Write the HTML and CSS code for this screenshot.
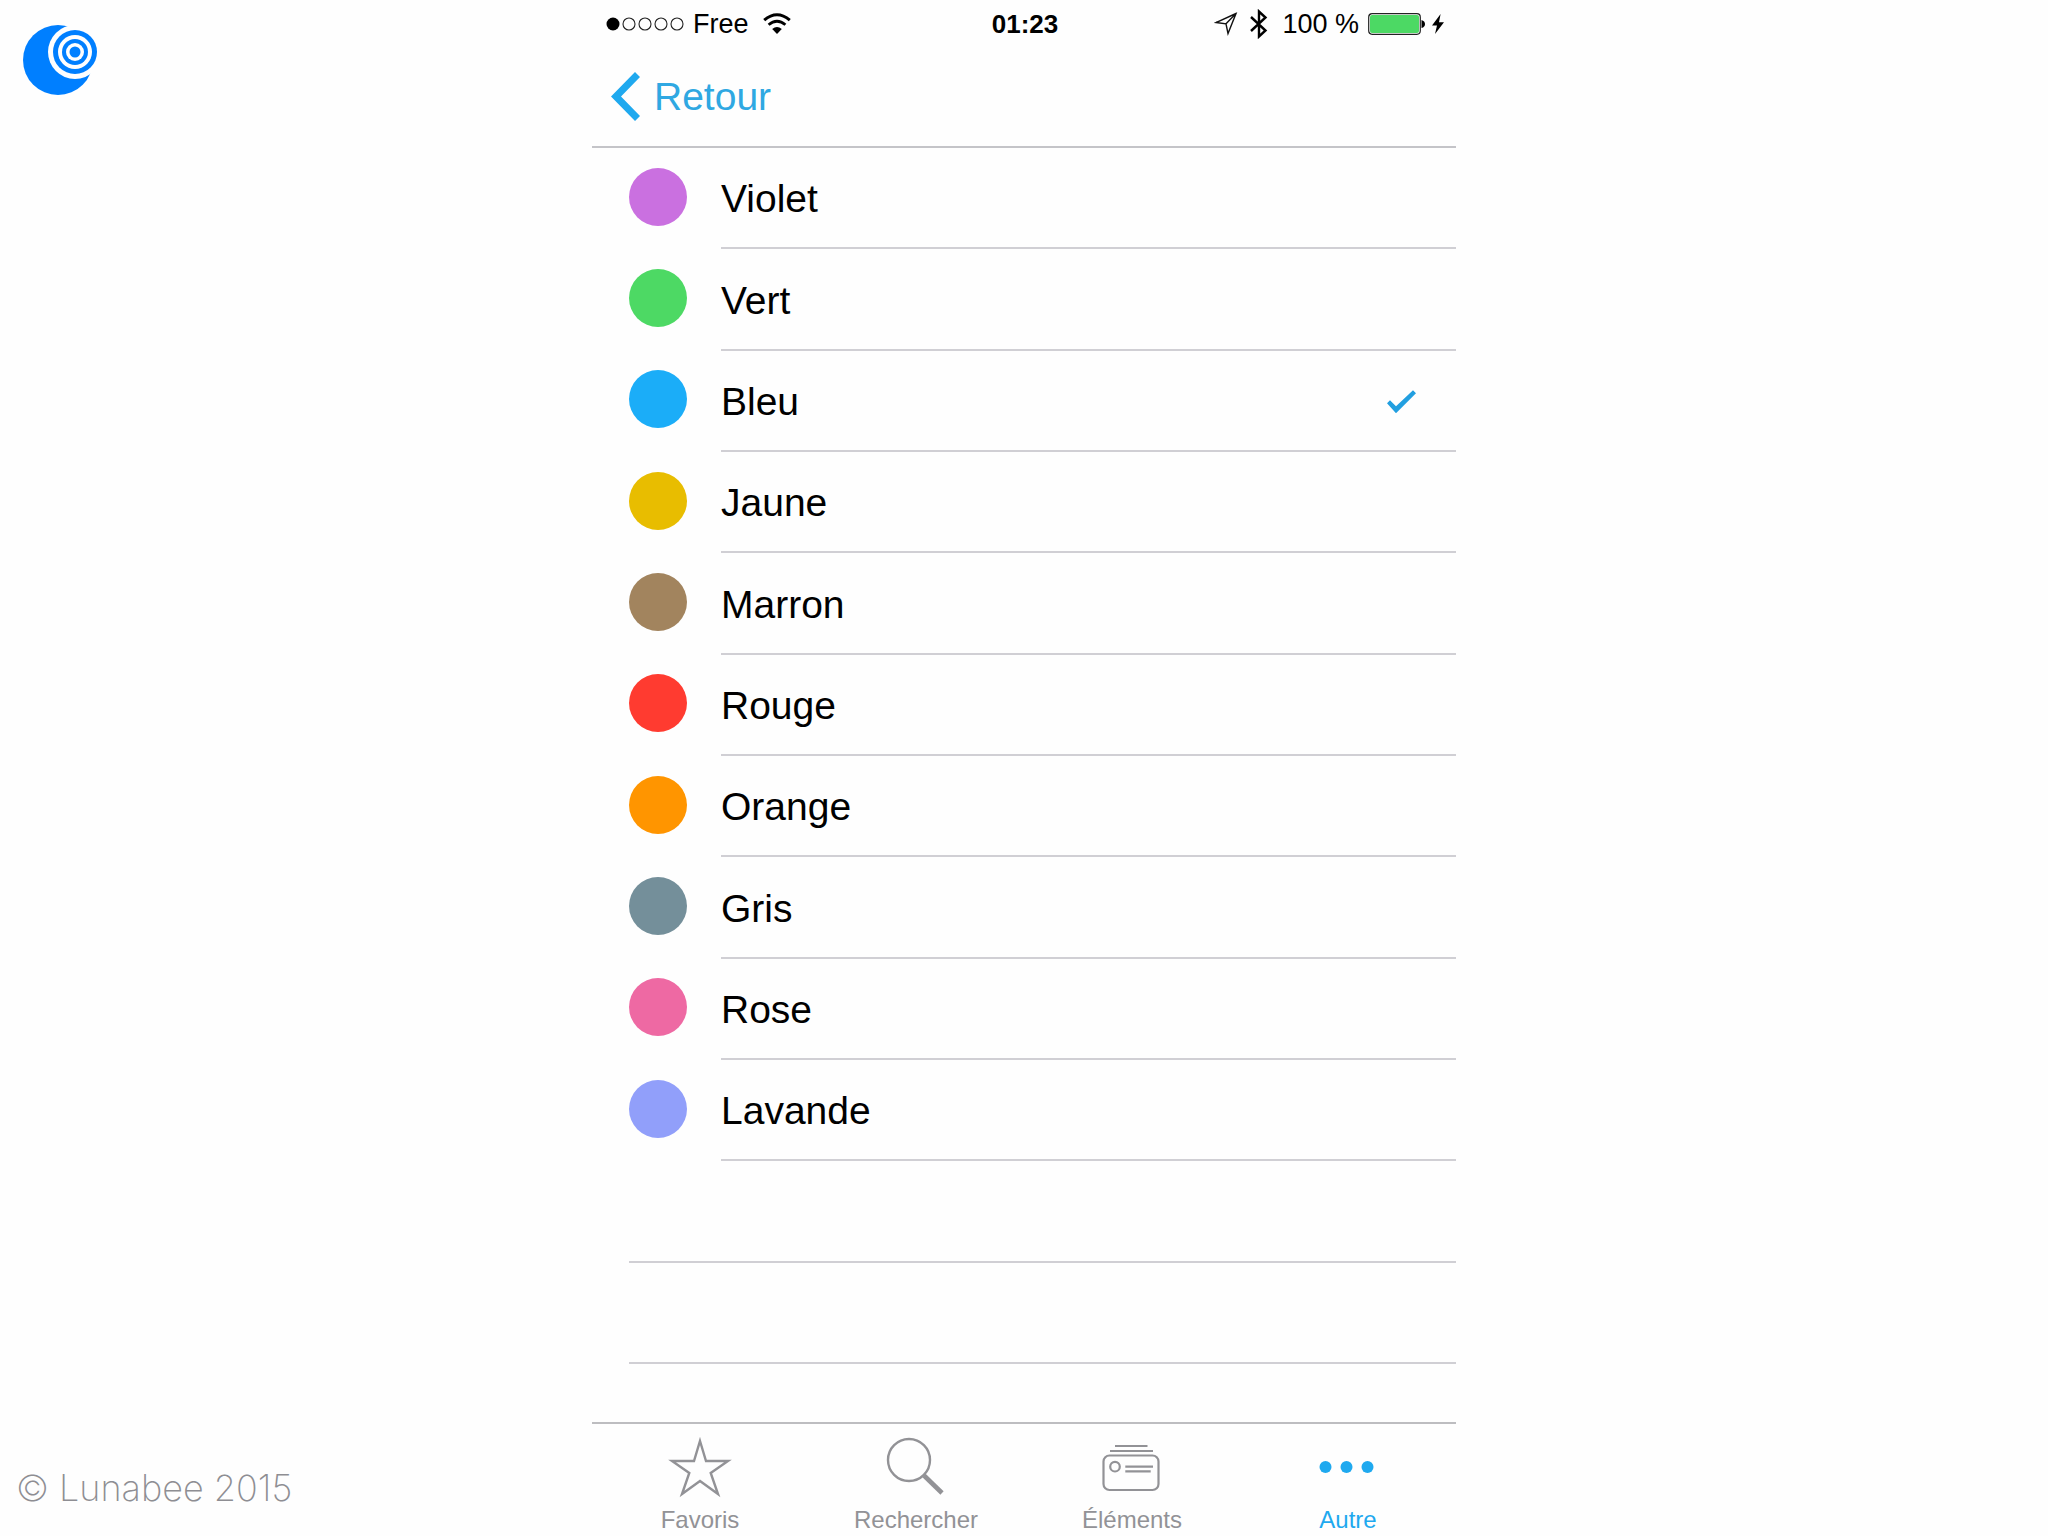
FILE: index.html
```
<!DOCTYPE html>
<html lang="fr">

<head>
    <meta charset="utf-8">
    <title>Couleurs</title>
    <link rel="stylesheet" href="styles.css">
</head>

<body>
    <div class="side-panel">
        <svg class="logo" viewBox="0 0 76 72" role="img" aria-label="Lunabee">
            <circle cx="36" cy="36" r="35" fill="#007fff" />
            <!-- Rings -->
            <circle cx="53" cy="28" r="27" fill="#fefefe" />
            <circle cx="53" cy="28" r="22" fill="#007fff" />
            <circle cx="53" cy="28" r="17" fill="#fefefe" />
            <circle cx="53" cy="28" r="13" fill="#007fff" />
            <circle cx="53" cy="28" r="9" fill="#fefefe" />
            <circle cx="53" cy="28" r="5.5" fill="#007fff" />
        </svg>
        <div class="copyright">© Lunabee 2015</div>
    </div>

    <div class="phone">
        <header class="header">
            <div class="status-bar">
                <div class="status-left">
                    <svg class="signal" viewBox="0 0 78 14">
                        <circle cx="7" cy="7" r="6.5" fill="#000" />
                        <g fill="none" stroke="#222" stroke-width="1.1">
                            <circle cx="23" cy="7" r="6" />
                            <circle cx="39" cy="7" r="6" />
                            <circle cx="55" cy="7" r="6" />
                            <circle cx="71" cy="7" r="6" />
                        </g>
                    </svg>
                    <span class="status-text">Free</span>
                    <svg class="wifi" viewBox="0 0 28 22">
                        <path d="M1.2 7.2 Q14 -3.8 26.8 7.2" fill="none" stroke="#000" stroke-width="3" />
                        <path d="M5.6 11.8 Q14 4.6 22.4 11.8" fill="none" stroke="#000" stroke-width="2.8" />
                        <path d="M9.2 16 Q14 12 18.8 16 L14 21 Z" fill="#000" />
                    </svg>
                </div>
                <div class="status-text time">01:23</div>
                <div class="status-right">
                    <svg class="location" viewBox="0 0 24 24">
                        <path d="M22 1.5 L2 10.5 L12 11.8 L14 21.5 Z M22 1.5 L12 11.8" fill="none" stroke="#111"
                            stroke-width="1.4" />
                    </svg>
                    <svg class="bluetooth" viewBox="0 0 18 30">
                        <path d="M1 8 L15.5 21.5 L9 27.5 V2.5 L15.5 8.5 L1 22" fill="none" stroke="#000"
                            stroke-width="2.4" />
                    </svg>
                    <span class="status-text">100 %</span>
                    <svg class="battery" viewBox="0 0 57 22">
                        <rect x="0.7" y="0.7" width="51.6" height="20.6" rx="3.5" fill="#fff" stroke="#222"
                            stroke-width="1.2" />
                        <rect x="2" y="2" width="49" height="18" rx="2" fill="#4cd964" />
                        <path d="M53.5 7 Q57 8 57 11 Q57 14 53.5 15 Z" fill="#000" />
                    </svg>
                    <svg class="bolt" viewBox="0 0 12 20">
                        <path d="M8.6 0 L0 11.6 H5 L3 20 L12 8.2 H7 Z" fill="#000" />
                    </svg>
                </div>
            </div>
            <nav class="nav-bar">
                <a class="back" href="#">
                    <svg class="chevron" viewBox="0 0 29 49">
                        <path d="M0 24.5 L24 0 L29 5 L10 24.5 L29 44 L24 49 Z" fill="#1fa9ef" />
                    </svg>
                    <span>Retour</span>
                </a>
            </nav>
        </header>

        <main class="color-list">
            <label class="row">
                <span class="swatch violet"></span>
                <span class="row-content">Violet <input type="radio" name="color" value="violet"></span>
            </label>
            <label class="row">
                <span class="swatch vert"></span>
                <span class="row-content">Vert <input type="radio" name="color" value="vert"></span>
            </label>
            <label class="row">
                <span class="swatch bleu"></span>
                <span class="row-content">Bleu <input type="radio" name="color" value="bleu" checked></span>
            </label>
            <label class="row">
                <span class="swatch jaune"></span>
                <span class="row-content">Jaune <input type="radio" name="color" value="jaune"></span>
            </label>
            <label class="row">
                <span class="swatch marron"></span>
                <span class="row-content">Marron <input type="radio" name="color" value="marron"></span>
            </label>
            <label class="row">
                <span class="swatch rouge"></span>
                <span class="row-content">Rouge <input type="radio" name="color" value="rouge"></span>
            </label>
            <label class="row">
                <span class="swatch orange"></span>
                <span class="row-content">Orange <input type="radio" name="color" value="orange"></span>
            </label>
            <label class="row">
                <span class="swatch gris"></span>
                <span class="row-content">Gris <input type="radio" name="color" value="gris"></span>
            </label>
            <label class="row">
                <span class="swatch rose"></span>
                <span class="row-content">Rose <input type="radio" name="color" value="rose"></span>
            </label>
            <label class="row">
                <span class="swatch lavande"></span>
                <span class="row-content">Lavande <input type="radio" name="color" value="lavande"></span>
            </label>
            <!-- Empty rows -->
            <div class="row-empty"></div>
            <div class="row-empty"></div>
        </main>

        <nav class="tab-bar">
            <a class="tab" href="#">
                <svg class="tab-icon" viewBox="0 0 64 64">
                    <path d="M32 7 L38 27 H60 L42.7 39 L50 60 L32 47 L14 60 L21.3 39 L4 27 H26 Z" fill="none"
                        stroke="currentColor" stroke-width="2.4" stroke-miterlimit="10" />
                </svg>
                <span>Favoris</span>
            </a>
            <a class="tab" href="#">
                <svg class="tab-icon" viewBox="0 0 64 64">
                    <circle cx="25" cy="26" r="21" fill="none" stroke="currentColor" stroke-width="2.4" />
                    <line x1="40" y1="41.5" x2="58" y2="59" stroke="currentColor" stroke-width="4.6" />
                </svg>
                <span>Rechercher</span>
            </a>
            <a class="tab" href="#">
                <svg class="tab-icon" viewBox="0 0 64 64" fill="none" stroke="currentColor" stroke-width="2.2">
                    <rect x="3.5" y="21.5" width="55" height="34.5" rx="6" />
                    <path d="M15 12 H47.5 M10 17 H53" />
                    <circle cx="15" cy="32.7" r="4.8" />
                    <path d="M25.3 32.7 H53 M25.3 37.3 H50.7" />
                </svg>
                <span>Éléments</span>
            </a>
            <a class="tab active" href="#">
                <svg class="tab-icon" viewBox="0 0 64 64" fill="currentColor">
                    <circle cx="9.5" cy="33" r="6" />
                    <circle cx="30.5" cy="33" r="6" />
                    <circle cx="51.5" cy="33" r="6" />
                </svg>
                <span>Autre</span>
            </a>
        </nav>
    </div>
</body>

</html>
```

FILE: styles.css
```
* {
    box-sizing: border-box;
}

body {
    margin: 0;
    min-height: 100vh;
    display: grid;
    grid-template-columns: 1fr auto 1fr;
    background: #fefefe;
    color: #000;
    font-family: "Liberation Sans", Arial, sans-serif;
}

a {
    color: inherit;
    text-decoration: none;
}

svg {
    display: block;
    flex: none;
}

.side-panel {
    display: flex;
    flex-direction: column;
    justify-content: space-between;
    padding: 24px 16px;
}

.logo {
    width: 76px;
    margin-left: 6px;
}

.copyright {
    font-family: Inter, "Liberation Sans", sans-serif;
    font-weight: 200;
    font-size: 36px;
    line-height: 48px;
    color: #8e8e93;
    white-space: nowrap;
}

.phone {
    display: flex;
    flex-direction: column;
    min-height: 100vh;
    aspect-ratio: 9 / 16;
}

.header {
    border-bottom: 2px solid #c4c4c8;
}

/* Status bar */
.status-bar {
    display: grid;
    grid-template-columns: 1fr auto 1fr;
    align-items: center;
    height: 47px;
    padding: 0 12px 0 14px;
    font-size: 27px;
}

.status-left,
.status-right {
    display: flex;
    align-items: center;
}

.status-right {
    justify-content: flex-end;
}

.status-text {
    padding-top: 2px;
}

.time {
    font-size: 26px;
    font-weight: bold;
}

.signal {
    width: 78px;
    margin-right: 9px;
}

.wifi {
    width: 28px;
    margin-left: 14px;
}

.location {
    width: 24px;
    margin-right: 12px;
}

.bluetooth {
    width: 18px;
    margin-right: 14px;
}

.battery {
    width: 57px;
    margin-left: 9px;
    margin-right: 7px;
}

.bolt {
    width: 12px;
}

/* Navigation */
.nav-bar {
    display: flex;
    align-items: center;
    height: 99px;
    padding-left: 19px;
}

.back {
    display: flex;
    align-items: center;
    gap: 14px;
    color: #2fa8e2;
    font-size: 39px;
}

.chevron {
    width: 29px;
}

/* Color list: twelve equal rows and the start of a thirteenth */
.color-list {
    flex: 1;
    display: grid;
    grid-template-rows: repeat(12, 7fr) 4fr;
}

.row {
    display: flex;
    align-items: center;
    gap: 34px;
    padding-left: 37px;
    font-size: 39px;
    cursor: pointer;
}

.row-content {
    flex: 1;
    align-self: stretch;
    display: flex;
    align-items: center;
    justify-content: space-between;
    padding-top: 3px;
    padding-right: 40px;
    border-bottom: 2px solid #d0cfd4;
}

.row input {
    appearance: none;
    margin: 0;
    width: 29px;
    height: 23px;
    clip-path: polygon(0 13px, 3px 10px, 9px 16px, 26px 0, 29px 3px, 9px 23px);
}

.row input:checked {
    background: #229fe0;
}

.row-empty {
    margin-left: 37px;
    border-bottom: 2px solid #d0cfd4;
}

.swatch {
    width: 58px;
    height: 58px;
    margin-bottom: 4px;
    border-radius: 50%;
}

.violet {
    background: #ca70e0;
}

.vert {
    background: #4dd964;
}

.bleu {
    background: #1badf8;
}

.jaune {
    background: #e8bd00;
}

.marron {
    background: #a2845e;
}

.rouge {
    background: #ff3b30;
}

.orange {
    background: #ff9500;
}

.gris {
    background: #748f9a;
}

.rose {
    background: #ee69a3;
}

.lavande {
    background: #919ffa;
}

/* Tab bar */
.tab-bar {
    display: grid;
    grid-template-columns: repeat(4, 1fr);
    padding: 10px 0 2px;
    border-top: 2px solid #bdbdc0;
}

.tab {
    display: flex;
    flex-direction: column;
    align-items: center;
    gap: 8px;
    color: #929296;
    font-size: 24px;
    line-height: 28px;
}

.tab-icon {
    width: 64px;
    height: 64px;
}

.tab.active {
    color: #1fa9ef;
}
```
